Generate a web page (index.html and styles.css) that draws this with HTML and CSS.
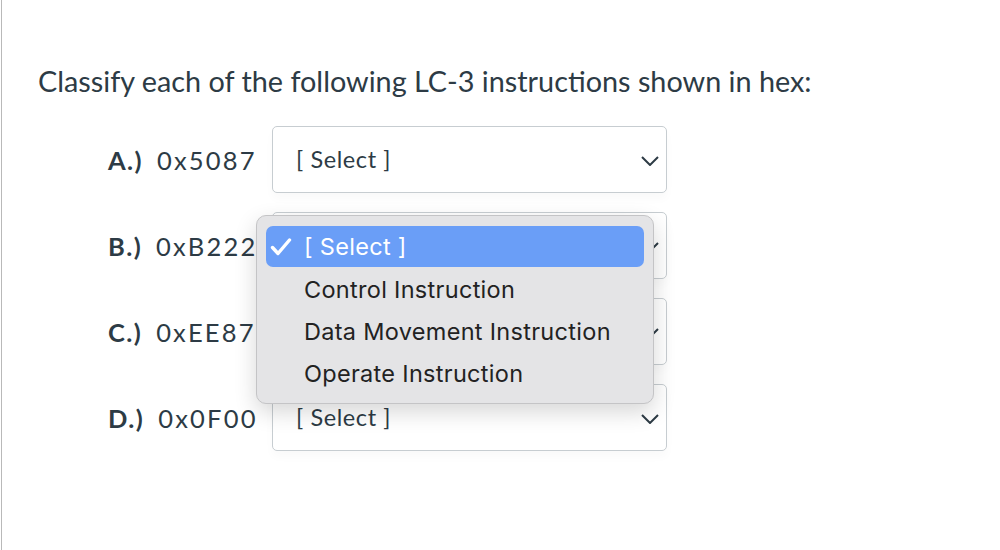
FILE: index.html
```html
<!DOCTYPE html>
<html lang="en">
<head>
  <meta charset="UTF-8" />
  <meta name="viewport" content="width=device-width, initial-scale=1.0"/>
  <title>LC-3 Instructions</title>
  <link rel="stylesheet" href="styles.css">
</head>
<body>

  <div class="question">
    <p class="prompt">Classify each of the following LC-3 instructions shown in hex:</p>

    <!-- Answer rows -->
    <div class="answers">
      <div class="row">
        <div class="label"><span class="letter">A.)</span>0x5087</div>
        <div class="select">
          <span>[ Select ]</span>
          <svg class="chevron" width="18" height="10" viewBox="0 0 18 10"><path d="M1 1 L9 9 L17 1" fill="none" stroke="#2d3b45" stroke-width="2"/></svg>
        </div>
      </div>
      <div class="row">
        <div class="label"><span class="letter">B.)</span>0xB222</div>
        <div class="select">
          <span>[ Select ]</span>
          <svg class="chevron" width="18" height="10" viewBox="0 0 18 10"><path d="M1 1 L9 9 L17 1" fill="none" stroke="#2d3b45" stroke-width="2"/></svg>
        </div>
      </div>
      <div class="row">
        <div class="label"><span class="letter">C.)</span>0xEE87</div>
        <div class="select">
          <span>[ Select ]</span>
          <svg class="chevron" width="18" height="10" viewBox="0 0 18 10"><path d="M1 1 L9 9 L17 1" fill="none" stroke="#2d3b45" stroke-width="2"/></svg>
        </div>
      </div>
      <div class="row">
        <div class="label"><span class="letter">D.)</span>0x0F00</div>
        <div class="select">
          <span>[ Select ]</span>
          <svg class="chevron" width="18" height="10" viewBox="0 0 18 10"><path d="M1 1 L9 9 L17 1" fill="none" stroke="#2d3b45" stroke-width="2"/></svg>
        </div>
      </div>
    </div>
  </div>

  <!-- Open popup menu for B -->
  <ul class="menu">
    <li class="selected">
      <span class="mark"><svg width="22" height="18" viewBox="0 0 22 18"><path d="M2.5 9.5 L8 15.5 L19.5 2" fill="none" stroke="#fff" stroke-width="3.4" stroke-linecap="round" stroke-linejoin="round"/></svg></span>
      [ Select ]
    </li>
    <li><span class="mark"></span>Control Instruction</li>
    <li><span class="mark"></span>Data Movement Instruction</li>
    <li><span class="mark"></span>Operate Instruction</li>
  </ul>

</body>
</html>
```

FILE: styles.css
```css
body {
  margin: 0;
  background-color: #fff;
  font-family: Lato, "Liberation Sans", sans-serif;
  color: #2d3b45;
}
.question {
  margin-left: 1px;
  height: 550px;
  border-left: 1px solid #b9b9b9;
  padding: 64px 0 0 36px;
  box-sizing: border-box;
}
.prompt {
  margin: 0;
  font-size: 28.8px;
  line-height: 34px;
}
.answers {
  margin-top: 28px;
  margin-left: 70px;
  display: grid;
  row-gap: 19px;
}
.row {
  display: flex;
  align-items: center;
  height: 67px;
}
.label {
  width: 164px;
  font-size: 25.5px;
  letter-spacing: 2.2px;
}
.letter {
  font-weight: bold;
  margin-right: 14px;
  letter-spacing: 1.4px;
}
.select {
  width: 395px;
  height: 67px;
  box-sizing: border-box;
  border: 1px solid #c7cdd1;
  border-radius: 5px;
  padding: 0 7px 2px 23px;
  display: flex;
  align-items: center;
  justify-content: space-between;
  font-size: 23.5px;
  letter-spacing: 0.6px;
  background-color: #fff;
  box-shadow: 0 6px 10px rgba(0, 0, 0, 0.025);
}
.chevron {
  margin-top: 4px;
}
.menu {
  position: absolute;
  left: 256px;
  top: 215px;
  width: 398px;
  box-sizing: border-box;
  margin: 0;
  padding: 10px 9px 9px 9px;
  list-style: none;
  background-color: #e4e4e6;
  border: 1px solid #c4c4c6;
  border-radius: 10px;
  box-shadow: 0 8px 22px rgba(0, 0, 0, 0.16);
  font-family: Inter, "Noto Sans", sans-serif;
  font-size: 23.5px;
  letter-spacing: 0.3px;
  color: #222;
}
.menu li {
  height: 42px;
  display: flex;
  align-items: center;
  border-radius: 7px;
}
.menu li.selected {
  height: 41px;
  margin-bottom: 1px;
  background-color: #6a9ef7;
  color: #fff;
}
.mark {
  width: 34px;
  margin-left: 4px;
  display: flex;
  align-items: center;
}
```
